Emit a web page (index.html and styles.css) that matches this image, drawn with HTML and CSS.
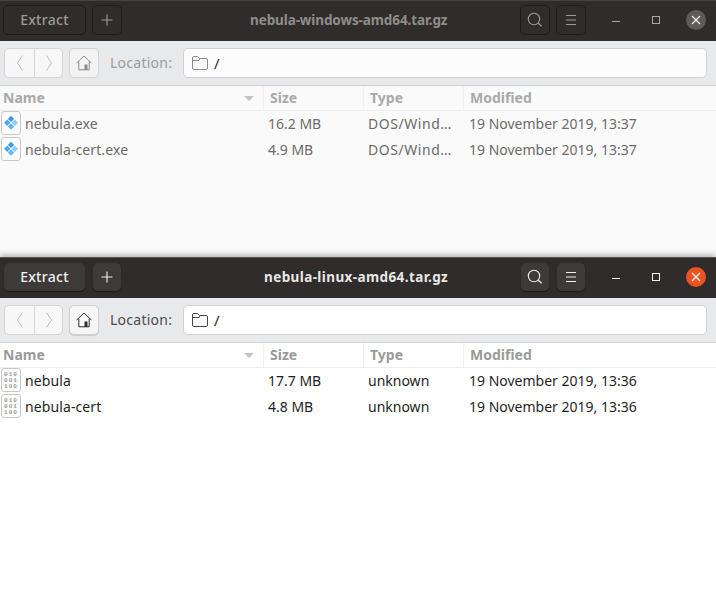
FILE: index.html
```html
<!DOCTYPE html>
<html lang="en">
<head>
<meta charset="utf-8">
<title>Archive Manager</title>
<link rel="stylesheet" href="styles.css">
</head>
<body>
<svg class="defs" width="0" height="0" aria-hidden="true">
  <symbol id="i-search" viewBox="0 0 16 16"><circle cx="7" cy="7" r="5.7" fill="none" stroke="currentColor" stroke-width="1.1"/><path d="M11 11l3.6 3.200" fill="none" stroke="currentColor" stroke-width="1.3"/></symbol>
  <symbol id="i-menu" viewBox="0 0 16 16"><path d="M3 3.500h10M3 8h10M3 12.500h10" fill="none" stroke="currentColor" stroke-width="1"/></symbol>
  <symbol id="i-plus" viewBox="0 0 12 12"><path d="M6 .5v11M.5 6h11" fill="none" stroke="currentColor" stroke-width="1.1"/></symbol>
  <symbol id="i-back" viewBox="0 0 8 16"><path d="M6.500 .5L1.500 8l5 7.500" fill="none" stroke="currentColor"/></symbol>
  <symbol id="i-forward" viewBox="0 0 8 16"><path d="M1.500 .5l5 7.500-5 7.500" fill="none" stroke="currentColor"/></symbol>
  <symbol id="i-home" viewBox="0 0 16 16"><path d="M.7 8L8 1l7.300 7M2.800 6.800v8h10.400V6.800" fill="none" stroke="currentColor" stroke-width="1"/><path d="M8.500 9.500h3v5.500h-3z" fill="currentColor"/></symbol>
  <symbol id="i-folder" viewBox="0 0 16 14"><path d="M.5 3V2a1.500 1.500 0 0 1 1.500-1.500h3.500l2 2H14A1.500 1.500 0 0 1 15.500 4v8a1.500 1.500 0 0 1-1.500 1.500H2A1.500 1.500 0 0 1 .5 12zM.5 4.500h6.500l1-1.800" fill="none" stroke="currentColor" stroke-width="1"/></symbol>
  <symbol id="i-close" viewBox="0 0 10 10"><path d="M1 1l8 8M9 1l-8 8" fill="none" stroke="currentColor" stroke-width="1.300"/></symbol>
  <symbol id="i-exe" viewBox="0 0 20 24">
    <rect x=".5" y=".5" width="19" height="23" rx="2.500" fill="#fbfbfb" stroke="#c8c8c8"/>
    <path d="M10 4.700l3.200 3.200L10 11.100 6.800 7.900z" fill="#3e9be0"/><path d="M10 12.300l3.200 3.200L10 18.700l-3.200-3.200z" fill="#64b6ee"/>
    <path d="M6.200 8.500l3.200 3.200-3.200 3.200L3 11.700z" fill="#4ea8ea"/><path d="M13.800 8.500l3.200 3.200-3.200 3.200-3.200-3.200z" fill="#8cccf5"/>
  </symbol>
</svg>

<section class="window window-backdrop">
  <header class="titlebar">
    <button class="hbtn hbtn-extract">Extract</button>
    <button class="hbtn hbtn-icon"><svg class="ic-plus"><use href="#i-plus"/></svg></button>
    <div class="title title-win">nebula-windows-amd64.tar.gz</div>
    <button class="hbtn hbtn-icon"><svg class="ic-16"><use href="#i-search"/></svg></button>
    <button class="hbtn hbtn-icon"><svg class="ic-16"><use href="#i-menu"/></svg></button>
    <div class="winctl">
      <span class="ctl-min"></span>
      <span class="ctl-max"></span>
      <span class="ctl-close"><svg class="ic-close"><use href="#i-close"/></svg></span>
    </div>
  </header>
  <div class="toolbar">
    <div class="navgroup">
      <button class="nav"><svg class="ic-nav"><use href="#i-back"/></svg></button>
      <button class="nav"><svg class="ic-nav"><use href="#i-forward"/></svg></button>
    </div>
    <button class="home"><svg class="ic-16"><use href="#i-home"/></svg></button>
    <span class="loc-label">Location:</span>
    <div class="entry"><svg class="ic-folder"><use href="#i-folder"/></svg><span class="path">/</span></div>
  </div>
  <div class="list">
    <div class="row row-head">
      <div class="cell cell-name">Name<span class="sort"></span></div>
      <div class="cell">Size</div>
      <div class="cell">Type</div>
      <div class="cell">Modified</div>
    </div>
    <div class="row">
      <div class="cell cell-name"><svg class="fileicon"><use href="#i-exe"/></svg>nebula.exe</div>
      <div class="cell">16.2 MB</div><div class="cell cell-wide">DOS/Wind…</div><div class="cell">19 November 2019, 13:37</div>
    </div>
    <div class="row">
      <div class="cell cell-name"><svg class="fileicon"><use href="#i-exe"/></svg>nebula-cert.exe</div>
      <div class="cell">4.9 MB</div><div class="cell cell-wide">DOS/Wind…</div><div class="cell">19 November 2019, 13:37</div>
    </div>
  </div>
</section>

<section class="window window-active">
  <header class="titlebar">
    <button class="hbtn hbtn-extract">Extract</button>
    <button class="hbtn hbtn-icon"><svg class="ic-plus"><use href="#i-plus"/></svg></button>
    <div class="title title-lin">nebula-linux-amd64.tar.gz</div>
    <button class="hbtn hbtn-icon"><svg class="ic-16"><use href="#i-search"/></svg></button>
    <button class="hbtn hbtn-icon"><svg class="ic-16"><use href="#i-menu"/></svg></button>
    <div class="winctl">
      <span class="ctl-min"></span>
      <span class="ctl-max"></span>
      <span class="ctl-close"><svg class="ic-close"><use href="#i-close"/></svg></span>
    </div>
  </header>
  <div class="toolbar">
    <div class="navgroup">
      <button class="nav"><svg class="ic-nav"><use href="#i-back"/></svg></button>
      <button class="nav"><svg class="ic-nav"><use href="#i-forward"/></svg></button>
    </div>
    <button class="home"><svg class="ic-16"><use href="#i-home"/></svg></button>
    <span class="loc-label">Location:</span>
    <div class="entry"><svg class="ic-folder"><use href="#i-folder"/></svg><span class="path">/</span></div>
  </div>
  <div class="list">
    <div class="row row-head">
      <div class="cell cell-name">Name<span class="sort"></span></div>
      <div class="cell">Size</div>
      <div class="cell">Type</div>
      <div class="cell">Modified</div>
    </div>
    <div class="row">
      <div class="cell cell-name"><span class="binicon">010<br>001<br>100</span>nebula</div>
      <div class="cell">17.7 MB</div><div class="cell">unknown</div><div class="cell">19 November 2019, 13:36</div>
    </div>
    <div class="row">
      <div class="cell cell-name"><span class="binicon">010<br>001<br>100</span>nebula-cert</div>
      <div class="cell">4.8 MB</div><div class="cell">unknown</div><div class="cell">19 November 2019, 13:36</div>
    </div>
  </div>
</section>
</body>
</html>
```
FILE: styles.css
```css
* { box-sizing: border-box; }
html, body { margin: 0; padding: 0; height: 100%; overflow: hidden; }
body { background: #fff; font-family: "Noto Sans", "Open Sans", sans-serif; font-size: 14px; }
.defs { display: block; height: 0; }
button { font: inherit; padding: 0; }

.window { display: flex; flex-direction: column; overflow: hidden; }
.window-backdrop { height: 257px; --fg: #6d6a6a; --list: #fafafa; --head: #a9a9a9; }
.window-active { position: relative; height: 344px; --fg: #1f1f1f; --list: #fff; --head: #9a9a9a; box-shadow: 0 -2px 6px rgba(0, 0, 0, .3); clip-path: inset(-8px 0 0 0); }

.titlebar { height: 41px; flex: none; display: flex; align-items: center; gap: 6px; padding: 0 0 2px 3px; background: #302c2b; border-top: 1px solid #48423f; }
.window-active .titlebar { background: #2f2c2b; border-top-color: #555; }

.hbtn { height: 30px; width: 30px; display: flex; align-items: center; justify-content: center; border-radius: 5px; border: 1px solid #1d1a19; background: transparent; color: #9c9a98; }
.window-active .hbtn { height: 28px; width: 28px; margin: 0 1px; border: none; background: #3d3a39; box-shadow: 0 1px 1px #1a1817; color: #f2f1f0; }
.hbtn-extract { width: 83px; padding-bottom: 2px; font-size: 14px; font-weight: 500; letter-spacing: .3px; }
.window-active .hbtn-extract { width: 81px; }
.ic-16 { width: 16px; height: 16px; }
.ic-plus { width: 12px; height: 12px; }

.title { flex: 1; font-weight: 700; font-size: 13.5px; white-space: nowrap; }
.title-win { color: #8f8c8a; padding-left: 122px; letter-spacing: -.1px; }
.title-lin { color: #e8e6e4; padding-left: 136px; letter-spacing: .4px; }

.winctl { width: 124px; flex: none; display: flex; align-items: center; height: 20px; }
.ctl-min { width: 8px; height: 1px; margin-left: 20px; margin-top: 3px; background: #a9a7a5; }
.ctl-max { width: 8px; height: 8px; margin-left: 32px; border: 1px solid #a9a7a5; }
.ctl-close { width: 20px; height: 20px; margin-left: 26px; border-radius: 50%; background: #5e5b5a; color: #f2f1f0; display: flex; align-items: center; justify-content: center; }
.ic-close { width: 10px; height: 10px; }
.window-active .ctl-min { background: #f2f1f0; }
.window-active .ctl-max { border-color: #f2f1f0; }
.window-active .ctl-close { background: #e95420; }

.toolbar { height: 45px; flex: none; display: flex; align-items: center; padding: 0 9px 1px 4px; background: #e8e9eb; border-bottom: 1px solid #cfd2d5; }
.navgroup { display: flex; height: 30px; border: 1px solid #d3d5d8; border-radius: 5px; background: #f7f7f7; }
.nav { width: 29px; border: none; background: transparent; display: flex; align-items: center; justify-content: center; color: #b9bbbe; }
.nav + .nav { width: 28px; border-left: 1px solid #d3d5d8; }
.ic-nav { width: 8px; height: 16px; }
.home { width: 30px; height: 30px; margin-left: 6px; display: flex; align-items: center; justify-content: center; border: 1px solid #cfd1d4; border-radius: 5px; background: #f3f3f3; color: #8b8b8b; }
.window-active .home { background: #f6f6f6; box-shadow: 0 1px 1px #c9cbce; color: #2e2e2e; }
.loc-label { margin-left: 11px; width: 73px; color: #9a9b9d; letter-spacing: .25px; }
.window-active .loc-label { color: #4d4d4d; }
.entry { flex: 1; height: 30px; display: flex; align-items: center; gap: 6px; padding-left: 8px; border: 1px solid #cfd1d4; border-radius: 5px; background: #fcfcfc; color: var(--fg); }
.window-active .entry { background: #fff; }
.ic-folder { width: 16px; height: 14px; color: #8b8b8b; }
.window-active .ic-folder { color: #444; }
.path { color: #2a2a2a; font-size: 15px; }

.list { flex: 1; background: var(--list); color: var(--fg); }
.row { display: grid; grid-template-columns: 264px 100px 100px 1fr; height: 26px; padding-bottom: 2px; align-items: center; }
.cell { white-space: nowrap; padding-left: 4px; display: flex; align-items: center; }
.row .cell + .cell + .cell + .cell { padding-left: 5px; }
.cell-name { padding-left: 1px; gap: 4px; letter-spacing: .1px; }
.cell-wide { letter-spacing: .55px; }
.row-head { height: 25px; grid-template-columns: 263px 100px 100px 1fr; padding-bottom: 0; border-bottom: 1px solid #eeeeee; color: var(--head); font-weight: 700; }
.row-head .cell { height: 100%; padding: 0 0 2px 6px; border-left: 1px solid #f0f0f0; }
.row-head .cell-name { padding-left: 3px; border-left: none; position: relative; letter-spacing: 0; }
.row-head .cell + .cell + .cell + .cell { padding-left: 6px; }
.sort { position: absolute; left: 244px; top: 10px; border-left: 5px solid transparent; border-right: 5px solid transparent; border-top: 5px solid #c4c4c4; }
.fileicon { width: 20px; height: 24px; flex: none; }
.binicon { width: 20px; height: 24px; flex: none; padding-top: 3px; border: 1px solid #c8c8c8; border-radius: 3px; background: #fbfbfb; color: #9c9c9c; font-family: "Liberation Mono", monospace; font-size: 6px; font-weight: 700; line-height: 6px; letter-spacing: 1px; text-align: center; }
```
